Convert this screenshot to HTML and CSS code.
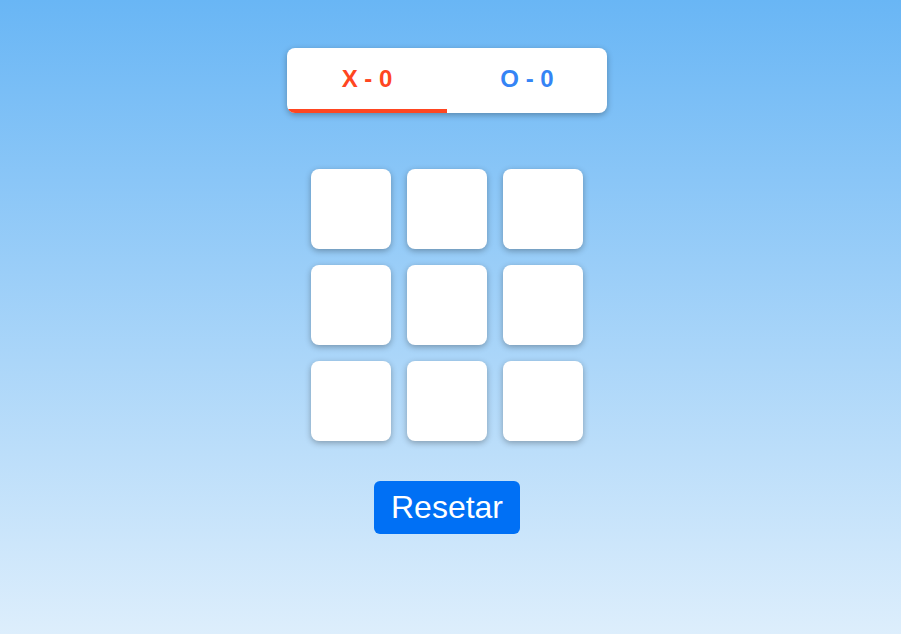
FILE: index.html
```html
<!DOCTYPE html>
<html>
<head>
<meta charset="utf-8">
<link rel="stylesheet" href="styles.css">
</head>
<body>
<main class="app">
  <div class="score">
    <div class="side side-x active">X - 0</div>
    <div class="side side-o">O - 0</div>
  </div>
  <div class="board">
    <div class="cell"></div><div class="cell"></div><div class="cell"></div>
    <div class="cell"></div><div class="cell"></div><div class="cell"></div>
    <div class="cell"></div><div class="cell"></div><div class="cell"></div>
  </div>
  <button class="reset">Resetar</button>
</main>
</body>
</html>
```

FILE: styles.css
```css
html, body {
  margin: 0;
  height: 100%;
}
body {
  background: linear-gradient(180deg, #69b6f5 0%, #ddeefc 100%);
  font-family: "Liberation Sans", Arial, sans-serif;
}
.app {
  display: flex;
  flex-direction: column;
  align-items: center;
  padding: 48px 7px 0 0;
}
.score {
  width: 320px;
  height: 65px;
  background: #fff;
  border-radius: 8px;
  box-shadow: 0 2px 6px rgba(0, 0, 0, 0.3);
  display: flex;
  overflow: hidden;
}
.side {
  flex: 1;
  display: flex;
  align-items: center;
  justify-content: center;
  font-size: 24px;
  font-weight: bold;
  border-bottom: 4px solid transparent;
}
.side-x { color: #ff4621; }
.side-o { color: #3584f5; }
.side.active { border-bottom-color: #ff4621; }
.board {
  margin-top: 56px;
  display: grid;
  grid-template-columns: repeat(3, 80px);
  grid-auto-rows: 80px;
  gap: 16px;
}
.cell {
  background: #fff;
  border-radius: 8px;
  box-shadow: 0 2px 6px rgba(0, 0, 0, 0.3);
}
.reset {
  margin-top: 40px;
  background: #0070f5;
  color: #fff;
  border: none;
  border-radius: 6px;
  font-family: "Liberation Sans", Arial, sans-serif;
  font-size: 32px;
  padding: 8px 17px;
  line-height: 37px;
}
```
